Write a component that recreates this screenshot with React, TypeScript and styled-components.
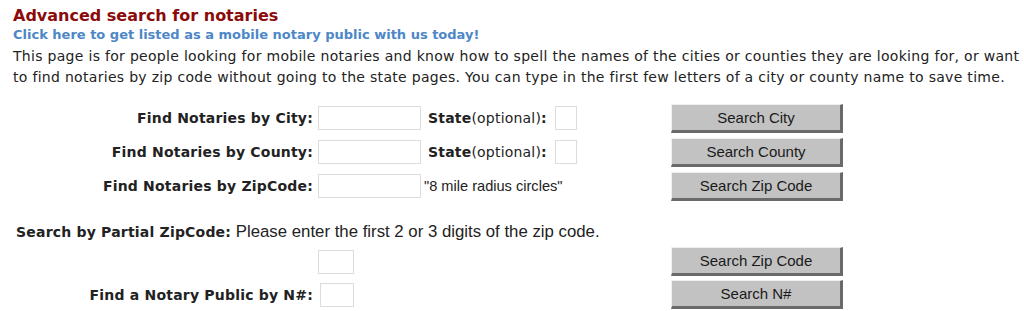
import styled, { createGlobalStyle } from "styled-components"

const GlobalStyle = createGlobalStyle`
    body {
        margin: 0;
        background: #ffffff;
        color: #222222;
        font-family: "DejaVu Sans", Verdana, sans-serif;
    }
`

const Page = styled.div`
    padding: 6px 0 0 13px;
    width: 1024px;
    box-sizing: border-box;
`

const Title = styled.h1`
    margin: 0;
    font-size: 16px;
    line-height: 20px;
    font-weight: bold;
    color: #8b0a0a;
`

const ListLink = styled.a`
    display: block;
    margin-top: 1px;
    font-size: 13px;
    line-height: 16px;
    font-weight: bold;
    color: #4d87c7;
    text-decoration: none;
`

const Intro = styled.p`
    margin: 3px 0 0;
    font-size: 14px;
    letter-spacing: 0.3px;
    line-height: 21px;
    white-space: nowrap;
    color: #222222;
`

const Form = styled.form`
    margin-top: 13px;
    display: flex;
    flex-direction: column;
`

const Row = styled.div<{ $h?: number }>`
    display: grid;
    grid-template-columns: 305px 110px 243px 171px;
    align-items: center;
    height: ${({ $h }) => $h ?? 34}px;
`

const Label = styled.label`
    text-align: right;
    padding-right: 5px;
    font-size: 14px;
    letter-spacing: 0.2px;
    font-weight: bold;
    color: #222222;
`

const Input = styled.input<{ $w: number; $shift?: number }>`
    width: ${({ $w }) => $w}px;
    height: 24px;
    box-sizing: border-box;
    border: 1px solid #dcdcdc;
    background: #ffffff;
    padding: 0 3px;
    margin: 0 0 0 ${({ $shift }) => $shift ?? 0}px;
    outline: none;
`

const StateCell = styled.div`
    display: flex;
    align-items: center;
    gap: 8px;
    font-size: 14px;
    letter-spacing: 0.2px;
`

const Light = styled.span`
    font-weight: normal;
`

const Note = styled.span`
    margin-left: -4px;
    font-family: "Liberation Sans", Arial, sans-serif;
    font-size: 14.6px;
    letter-spacing: 0;
    color: #222222;
`

const Button = styled.button`
    width: 172px;
    height: 29px;
    box-sizing: border-box;
    margin: 0;
    padding: 0;
    background: #c2c2c2;
    border-style: solid;
    border-width: 1px 3px 3px 1px;
    border-color: #efefef #6a6a6a #6a6a6a #efefef;
    font-family: "Liberation Sans", Arial, sans-serif;
    font-size: 15px;
    color: #1a1a1a;
`

const PartialLine = styled.div`
    margin: 18px 0 2px 3px;
    font-size: 14px;
    letter-spacing: 0.2px;
    line-height: 22px;
`

const Bold = styled.b`
    font-weight: bold;
`

const PartialNote = styled.span`
    font-family: "Liberation Sans", Arial, sans-serif;
    font-size: 16.8px;
    letter-spacing: 0;
`

const Empty = styled.div``

export default function App() {
    return (
        <>
            <GlobalStyle />
            <Page>
                <Title>Advanced search for notaries</Title>
                <ListLink href="#">Click here to get listed as a mobile notary public with us today!</ListLink>
                <Intro>
                    This page is for people looking for mobile notaries and know how to spell the names of the cities or counties they are looking for, or want
                    <br />
                    to find notaries by zip code without going to the state pages. You can type in the first few letters of a city or county name to save time.
                </Intro>

                <Form onSubmit={(e) => e.preventDefault()}>
                    <Row>
                        <Label>Find Notaries by City:</Label>
                        <Input $w={103} />
                        <StateCell>
                            <Bold>State<Light>(optional)</Light>:</Bold>
                            <Input $w={22} />
                        </StateCell>
                        <Button type="button">Search City</Button>
                    </Row>
                    <Row>
                        <Label>Find Notaries by County:</Label>
                        <Input $w={103} />
                        <StateCell>
                            <Bold>State<Light>(optional)</Light>:</Bold>
                            <Input $w={22} />
                        </StateCell>
                        <Button type="button">Search County</Button>
                    </Row>
                    <Row>
                        <Label>Find Notaries by ZipCode:</Label>
                        <Input $w={103} />
                        <StateCell>
                            <Note>"8 mile radius circles"</Note>
                        </StateCell>
                        <Button type="button">Search Zip Code</Button>
                    </Row>

                    <PartialLine>
                        <Bold>Search by Partial ZipCode:</Bold>{" "}
                        <PartialNote>Please enter the first 2 or 3 digits of the zip code.</PartialNote>
                    </PartialLine>
                    <Row $h={33}>
                        <Empty />
                        <Input $w={36} />
                        <Empty />
                        <Button type="button">Search Zip Code</Button>
                    </Row>
                    <Row $h={33}>
                        <Label>Find a Notary Public by N#:</Label>
                        <Input $w={34} $shift={2} />
                        <Empty />
                        <Button type="button">Search N#</Button>
                    </Row>
                </Form>
            </Page>
        </>
    )
}
